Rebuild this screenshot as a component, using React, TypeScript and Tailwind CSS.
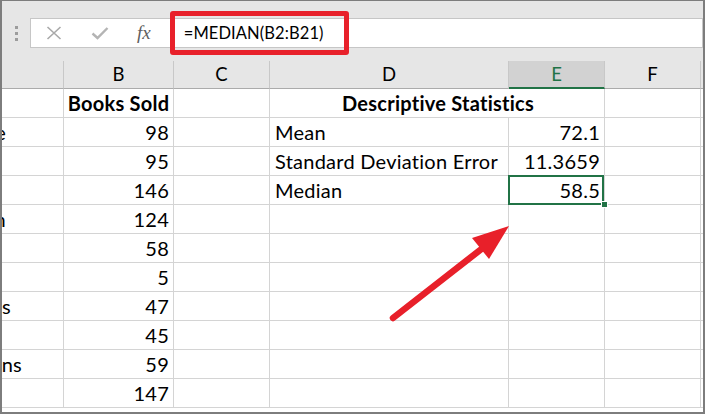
const FONT = "font-['Lato','Open_Sans',sans-serif]";

type Row = {
  a?: { text: string; end: number };
  b: string;
  d?: string;
  e?: string;
  selected?: boolean;
  bold?: boolean;
};

const rows: Row[] = [
  { b: "Books Sold", d: "Descriptive Statistics", bold: true },
  { a: { text: "Time Machine", end: 4 }, b: "98", d: "Mean", e: "72.1" },
  { b: "95", d: "Standard Deviation Error", e: "11.3659" },
  { b: "146", d: "Median", e: "58.5", selected: true },
  { a: { text: "Moon", end: 4 }, b: "124" },
  { b: "58" },
  { b: "5" },
  { a: { text: "Classics", end: 9 }, b: "47" },
  { b: "45" },
  { a: { text: "Champions", end: 20 }, b: "59" },
  { b: "147" },
];

const grid = "grid grid-cols-[62px_110px_96px_239px_96px_96px_1fr]";

const Cell = ({ children, className = "" }: { children?: React.ReactNode; className?: string }) => (
  <div className={`relative flex items-end border-r border-b border-[#d4d4d4] pb-[4px] leading-none ${className}`}>
    {children}
  </div>
);

const FormulaBar = () => (
  <div className="relative h-[58px] shrink-0 bg-[#e6e6e6] pt-[17px]">
    <div className="flex h-[30px] items-center">
      <div className="flex w-[28px] flex-col items-center gap-[3px]">
        <span className="h-[3px] w-[3px] bg-[#9c9c9c]" />
        <span className="h-[3px] w-[3px] bg-[#9c9c9c]" />
        <span className="h-[3px] w-[3px] bg-[#9c9c9c]" />
      </div>
      <div className="flex h-[30px] flex-1 items-center border border-[#c6c6c6] bg-white">
        <svg width="16" height="14" viewBox="0 0 16 14" className="ml-[15px]">
          <path d="M1.5 1 L14.5 13 M14.5 1 L1.5 13" stroke="#a9a9a9" strokeWidth="1.6" fill="none" />
        </svg>
        <svg width="18" height="14" viewBox="0 0 18 14" className="ml-[29px]">
          <path d="M1.5 7.5 L6.5 12 L16.5 2" stroke="#b4b4b4" strokeWidth="2.4" fill="none" />
        </svg>
        <span className="ml-[28px] font-['Liberation_Serif',serif] text-[19px] italic text-[#5f5f5f]">fx</span>
        <span className={`ml-[33px] ${FONT} text-[16.5px] tracking-[0.1px] text-black`}>=MEDIAN(B2:B21)</span>
      </div>
    </div>
    <div className="absolute left-[168px] top-[10px] h-[44px] w-[179px] rounded-[3px] border-[5px] border-[#e8212b]" />
  </div>
);

const ColumnHeaders = () => (
  <div className={`${grid} h-[30px] shrink-0 bg-[#e6e6e6] pt-[2px] ${FONT} text-[18.5px] leading-none`}>
    {["", "B", "C", "D", "E", "F", ""].map((l, i) => (
      <div
        key={i}
        className={`flex items-center justify-center border-b border-[#ababab] ${i < 6 ? "border-r border-r-[#c8c8c8]" : ""} ${
          l === "E" ? "border-b-2 border-b-[#217346] bg-[#d2d2d2] text-[#217346]" : "text-black"
        }`}
      >
        {l}
      </div>
    ))}
  </div>
);

export default function App() {
  return (
    <div className="relative flex h-[414px] w-[705px] flex-col overflow-hidden border-t border-b-2 border-l-2 border-r-2 border-[#7d7d7d] bg-white">
      <FormulaBar />
      <ColumnHeaders />
      <div className={`${FONT} text-[20px] tracking-[0.25px] text-black`}>
        {rows.map((r, i) => (
          <div key={i} className={`${grid} h-[29px]`}>
            <Cell className="overflow-hidden">
              {r.a && (
                <div className="flex justify-end whitespace-nowrap" style={{ width: r.a.end }}>
                  {r.a.text}
                </div>
              )}
            </Cell>
            <Cell className={`${r.bold ? "justify-center font-bold" : "justify-end pr-[4px]"}`}>{r.b}</Cell>
            <Cell />
            {r.bold ? (
              <Cell className="col-span-2 justify-center pl-[2px] font-bold">{r.d}</Cell>
            ) : (
              <>
                <Cell className="pl-[5px]">{r.d}</Cell>
                <Cell className={`justify-end pr-[4px] ${r.selected ? "z-10" : ""}`}>
                  {r.e}
                  {r.selected && (
                    <>
                      <span className="absolute -left-px -top-px bottom-[-1px] right-0 border-2 border-[#217346]" />
                      <span className="absolute bottom-[-4px] right-[-4px] h-[7px] w-[7px] border border-white bg-[#217346]" />
                    </>
                  )}
                </Cell>
              </>
            )}
            <Cell />
            <div className="border-b border-[#d4d4d4]" />
          </div>
        ))}
      </div>
      <svg className="pointer-events-none absolute left-0 top-0" width="705" height="414" viewBox="0 0 705 414">
        <path d="M391 317 L482 246" stroke="#e8202a" strokeWidth="6.5" strokeLinecap="round" fill="none" />
        <path d="M507 225 L470 237 L487 258 Z" fill="#e8202a" />
      </svg>
    </div>
  );
}
